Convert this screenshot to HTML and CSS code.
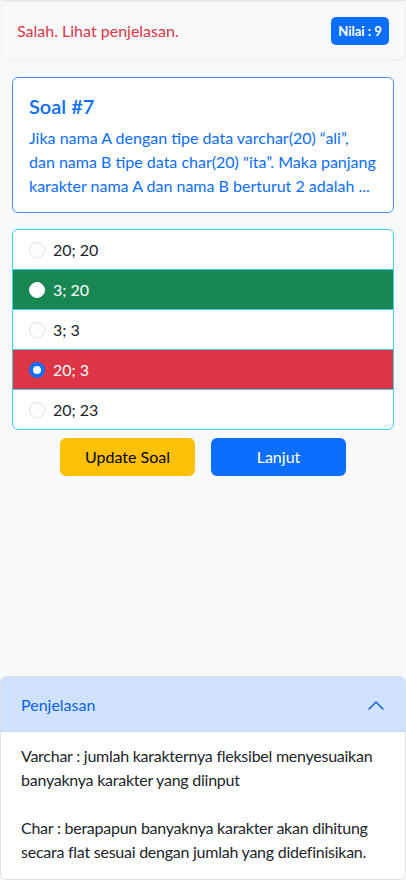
FILE: index.html
```html
<!DOCTYPE html>
<html lang="id">
<head>
<meta charset="utf-8">
<title>Soal #7</title>
<link rel="stylesheet" href="styles.css">
</head>
<body>
<div class="page">
  <header class="status">
    <span class="status-text">Salah. Lihat penjelasan.</span>
    <span class="badge">Nilai : 9</span>
  </header>

  <main class="content">
    <section class="question">
      <h2 class="question-title">Soal #7</h2>
      <p class="question-text">Jika nama A dengan tipe data varchar(20) “ali”, dan nama B tipe data char(20) "ita”. Maka panjang karakter nama A dan nama B berturut 2 adalah ...</p>
    </section>

    <ul class="options">
      <li class="option"><span class="radio"></span><span>20; 20</span></li>
      <li class="option option-correct"><span class="radio radio-white"></span><span>3; 20</span></li>
      <li class="option"><span class="radio"></span><span>3; 3</span></li>
      <li class="option option-wrong"><span class="radio radio-checked"></span><span>20; 3</span></li>
      <li class="option"><span class="radio"></span><span>20; 23</span></li>
    </ul>

    <div class="actions">
      <button class="btn btn-warning">Update Soal</button>
      <button class="btn btn-primary">Lanjut</button>
    </div>
  </main>

  <section class="accordion">
    <div class="accordion-header">
      <span>Penjelasan</span>
      <svg class="chevron" width="16" height="10" viewBox="0 0 16 10" fill="none"><path d="M1 9L8 2L15 9" stroke="#0c63e4" stroke-width="1.5" stroke-linecap="round" stroke-linejoin="round"/></svg>
    </div>
    <div class="accordion-body">
      <p>Varchar : jumlah karakternya fleksibel menyesuaikan banyaknya karakter yang diinput</p>
      <p>Char : berapapun banyaknya karakter akan dihitung secara flat sesuai dengan jumlah yang didefinisikan.</p>
    </div>
  </section>
</div>
</body>
</html>
```

FILE: styles.css
```css
* { box-sizing: border-box; }

html, body {
  margin: 0;
  padding: 0;
}

body {
  background: #f8f9fa;
  font-family: Lato, "Noto Sans", "Open Sans", sans-serif;
  font-size: 16px;
  line-height: 1.5;
  color: #212529;
}

.page {
  min-height: 880px;
  display: flex;
  flex-direction: column;
  border-top: 1px solid #e6e7e9;
}

.status {
  margin: 0 1px;
  height: 60px;
  border: 1px solid #eceef0;
  border-radius: 6px;
  background: #f8f9fa;
  display: flex;
  align-items: center;
  justify-content: space-between;
  padding: 0 15px;
}

.status-text {
  color: #dc3545;
}

.badge {
  background: #0d6efd;
  color: #fff;
  font-weight: 700;
  font-size: 13px;
  line-height: 1;
  height: 28px;
  width: 58px;
  display: inline-flex;
  align-items: center;
  justify-content: center;
  border-radius: 5px;
}

.content {
  padding: 16px 12px 0;
}

.question {
  background: #fff;
  border: 1px solid #4d8ff7;
  border-radius: 6px;
  padding: 16px 16px 14px;
}

.question-title {
  margin: 0 0 8px;
  font-size: 20px;
  font-weight: 600;
  line-height: 1.2;
  color: #0d6efd;
}

.question-text {
  margin: 0;
  color: #0d6efd;
}

.options {
  list-style: none;
  margin: 16px 0 0;
  padding: 0;
  border: 1px solid #3dd0f0;
  border-radius: 6px;
  background: #fff;
  overflow: hidden;
}

.option {
  height: 40px;
  display: flex;
  align-items: center;
  padding: 0 16px;
  border-top: 1px solid #3dd0f0;
}

.option:first-child {
  border-top: 0;
  height: 39px;
}

.option-correct {
  background: #198754;
  color: #fff;
  margin: 0 -1px;
  padding: 0 17px;
}

.option-wrong {
  background: #dc3545;
  color: #fff;
  margin: 0 -1px;
  padding: 0 17px;
}

.radio {
  width: 16px;
  height: 16px;
  border-radius: 50%;
  border: 1px solid #dee2e6;
  background: #fff;
  margin-right: 8px;
  flex: none;
}

.radio-white {
  border-color: #fff;
}

.radio-checked {
  border: 4px solid #0d6efd;
  background: #fff;
}

.actions {
  display: flex;
  justify-content: center;
  gap: 16px;
  margin-top: 8px;
}

.btn {
  width: 135px;
  height: 38px;
  border: 0;
  border-radius: 6px;
  font-family: inherit;
  font-size: 16px;
  line-height: 1.5;
}

.btn-warning {
  background: #ffc107;
  color: #000;
}

.btn-primary {
  background: #0d6efd;
  color: #fff;
}

.accordion {
  margin-top: auto;
  background: #fff;
  border: 1px solid #dee2e6;
  border-radius: 6px;
}

.accordion-header {
  height: 55px;
  display: flex;
  align-items: center;
  justify-content: space-between;
  padding: 0 20px;
  background: #cfe2ff;
  color: #0c63e4;
  border-radius: 5px 5px 0 0;
  box-shadow: inset 0 -1px 0 #c2d7f7;
}

.chevron {
  display: block;
  margin-right: 1px;
}

.accordion-body {
  padding: 12px 20px 15px;
  letter-spacing: -0.25px;
}

.accordion-body p {
  margin: 0;
}

.accordion-body p + p {
  margin-top: 24px;
}
```
